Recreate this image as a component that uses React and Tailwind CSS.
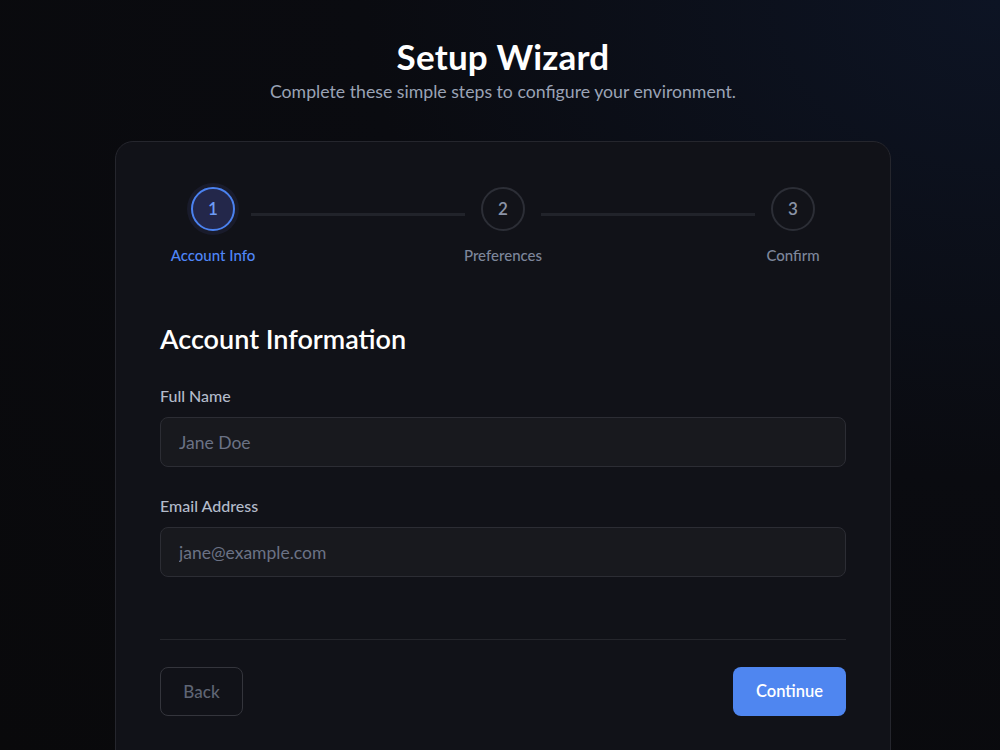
import React, { useState } from 'react';

const steps = ['Account Info', 'Preferences', 'Confirm'];

const StepCircle = ({ n, active }) =>
  active ? (
    <div className="w-11 h-11 rounded-full bg-[#23274a] border-2 border-[#4b82f0] ring-4 ring-[#191b2b] flex items-center justify-center text-[#6d9cf5] text-[17px] font-semibold shrink-0">
      {n}
    </div>
  ) : (
    <div className="w-11 h-11 rounded-full bg-[#121319] border-2 border-[#2c2e36] flex items-center justify-center text-[#8b93a7] text-[17px] font-semibold shrink-0">
      {n}
    </div>
  );

const SetupWizard = () => {
  const [name, setName] = useState('');
  const [email, setEmail] = useState('');

  return (
    <div
      className="min-h-screen h-[750px] overflow-hidden bg-[#09090b] bg-[radial-gradient(ellipse_at_top_right,#0d1424_0%,#0a0b10_45%,#09090b_100%)] flex flex-col items-center pt-[35px] pl-[6px]"
      style={{ fontFamily: 'Lato, "Noto Sans", sans-serif' }}
    >
      {/* Header */}
      <h1 className="text-[35px] leading-[42px] font-bold text-white tracking-[0.2px]">Setup Wizard</h1>
      <p className="text-[17.7px] leading-6 text-[#9aa3b5] mt-[3px]">Complete these simple steps to configure your environment.</p>

      {/* Card */}
      <div className="w-[776px] shrink-0 mt-[37px] bg-[#111218] border border-[#25262d] rounded-[18px] px-11 pt-[45px] pb-16">
        {/* Stepper */}
        <div className="flex items-start px-[31px]">
          <StepCircle n={1} active />
          <div className="flex-1 h-[3px] bg-[#21232a] mx-4 mt-[26px]" />
          <StepCircle n={2} />
          <div className="flex-1 h-[3px] bg-[#21232a] mx-4 mt-[26px]" />
          <StepCircle n={3} />
        </div>
        <div className="flex justify-between mt-[14px]">
          {steps.map((s, i) => (
            <div
              key={s}
              className={`w-[106px] text-center text-[15px] leading-5 font-medium ${i === 0 ? 'text-[#4f86f7]' : 'text-[#7d869b]'}`}
            >
              {s}
            </div>
          ))}
        </div>

        {/* Form */}
        <h2 className="text-[27px] leading-8 font-semibold text-white mt-[58px]">Account Information</h2>

        <label className="block text-base leading-5 font-medium text-[#b3bbca] mt-[31px]">Full Name</label>
        <input
          type="text"
          value={name}
          onChange={(e) => setName(e.target.value)}
          placeholder="Jane Doe"
          className="mt-[11px] w-full h-[50px] px-[18px] rounded-lg bg-[#18191e] border border-[#2c2d34] text-white placeholder-[#6b7285] text-[17.5px] outline-none"
        />

        <label className="block text-base leading-5 font-medium text-[#b3bbca] mt-[29px]">Email Address</label>
        <input
          type="email"
          value={email}
          onChange={(e) => setEmail(e.target.value)}
          placeholder="jane@example.com"
          className="mt-[11px] w-full h-[50px] px-[18px] rounded-lg bg-[#18191e] border border-[#2c2d34] text-white placeholder-[#6b7285] text-[17.5px] outline-none"
        />

        <div className="h-px bg-[#25262c] mt-[62px]" />

        {/* Actions */}
        <div className="flex justify-between mt-[27px]">
          <button className="w-[83px] h-[49px] rounded-lg border border-[#34353c] text-[#5f6574] text-[17px] font-medium">
            Back
          </button>
          <button className="w-[113px] h-[49px] rounded-lg bg-[#4f86f0] text-white text-[16.5px] font-semibold">
            Continue
          </button>
        </div>
      </div>
    </div>
  );
};

export default SetupWizard;
